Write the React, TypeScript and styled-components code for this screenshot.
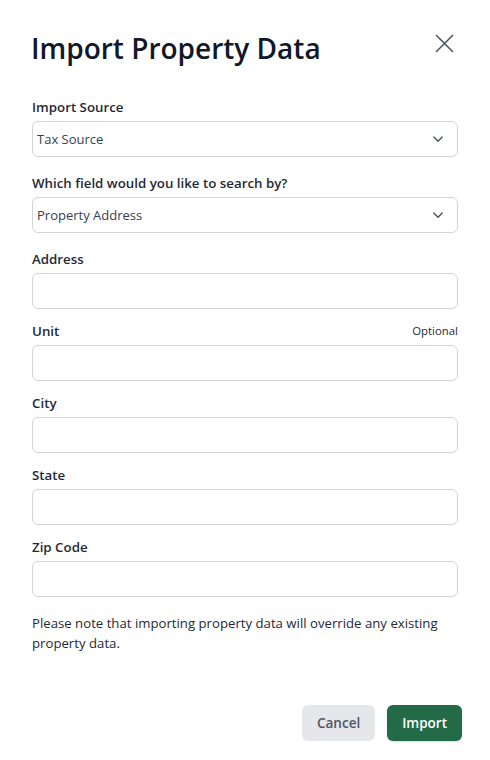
import styled, { createGlobalStyle } from "styled-components";

const GlobalStyle = createGlobalStyle`
  * { box-sizing: border-box; }
  body {
    margin: 0;
    background: #ffffff;
    font-family: "Open Sans", "Noto Sans", sans-serif;
    color: #1f2937;
  }
`;

type Field = { label: string; optional?: boolean };

const fields: Field[] = [
  { label: "Address" },
  { label: "Unit", optional: true },
  { label: "City" },
  { label: "State" },
  { label: "Zip Code" },
];

export default function App() {
  return (
    <>
      <GlobalStyle />
      <Dialog>
        <Header>
          <Title>Import Property Data</Title>
          <CloseButton aria-label="Close">
            <svg width="19" height="19" viewBox="0 0 19 19" fill="none">
              <path
                d="M1.5 1.5L17.5 17.5M17.5 1.5L1.5 17.5"
                stroke="#4b5563"
                strokeWidth="1.6"
                strokeLinecap="round"
              />
            </svg>
          </CloseButton>
        </Header>

        <Form>
          <Group $select>
            <LabelRow>
              <Label>Import Source</Label>
            </LabelRow>
            <SelectBox>
              <span>Tax Source</span>
              <Chevron />
            </SelectBox>
          </Group>

          <Group $select>
            <LabelRow>
              <Label>Which field would you like to search by?</Label>
            </LabelRow>
            <SelectBox>
              <span>Property Address</span>
              <Chevron />
            </SelectBox>
          </Group>

          {fields.map((f) => (
            <Group key={f.label}>
              <LabelRow>
                <Label>{f.label}</Label>
                {f.optional && <Hint>Optional</Hint>}
              </LabelRow>
              <Input />
            </Group>
          ))}
        </Form>

        <Note>
          Please note that importing property data will override any existing
          property data.
        </Note>

        <Footer>
          <Button>Cancel</Button>
          <Button $primary>Import</Button>
        </Footer>
      </Dialog>
    </>
  );
}

function Chevron() {
  return (
    <svg width="12" height="12" viewBox="0 0 12 12" fill="none">
      <path
        d="M1.8 4L6 8.2L10.2 4"
        stroke="#4b5563"
        strokeWidth="1.4"
        strokeLinecap="round"
        strokeLinejoin="round"
      />
    </svg>
  );
}

const Dialog = styled.div`
  width: 490px;
  height: 760px;
  padding: 28px 28px 0 32px;
  display: flex;
  flex-direction: column;
`;

const Header = styled.div`
  display: flex;
  justify-content: space-between;
  align-items: flex-start;
  padding-right: 4px;
`;

const Title = styled.h1`
  margin: 0;
  margin-left: -1px;
  font-size: 28px;
  line-height: 40px;
  font-weight: 600;
  color: #111827;
`;

const CloseButton = styled.button`
  border: none;
  background: none;
  padding: 0;
  margin-top: 6px;
  margin-right: 4px;
  width: 19px;
  height: 19px;
  display: flex;
  cursor: pointer;
`;

const Form = styled.div`
  margin-top: 29px;
  padding-right: 4px;
  display: flex;
  flex-direction: column;
  gap: 12px;
`;

const Group = styled.div<{ $select?: boolean }>`
  display: flex;
  flex-direction: column;
  margin-bottom: ${(p) => (p.$select ? "4px" : "0")};
`;

const LabelRow = styled.div`
  display: flex;
  justify-content: space-between;
  align-items: flex-end;
  height: 20px;
  margin-bottom: 4px;
`;

const Label = styled.label`
  font-size: 13.3px;
  font-weight: 600;
  line-height: 20px;
  color: #1f2937;
`;

const Hint = styled.span`
  font-size: 11.4px;
  line-height: 20px;
  color: #1f2937;
`;

const SelectBox = styled.div`
  height: 36px;
  border: 1px solid #d1d5db;
  border-radius: 6px;
  padding: 0 13px 0 4px;
  display: flex;
  align-items: center;
  justify-content: space-between;
  font-size: 13px;
  color: #374151;
`;

const Input = styled.input`
  height: 36px;
  width: 100%;
  border: 1px solid #d1d5db;
  border-radius: 6px;
  padding: 0 8px;
  font-family: inherit;
  font-size: 14px;
  outline: none;
`;

const Note = styled.p`
  margin: 16px 0 0;
  padding-right: 4px;
  font-size: 13.2px;
  line-height: 20px;
  color: #1f2937;
`;

const Footer = styled.div`
  margin-top: 52px;
  display: flex;
  justify-content: flex-end;
  gap: 12px;
`;

const Button = styled.button<{ $primary?: boolean }>`
  height: 36px;
  padding: 0 15px;
  border: none;
  border-radius: 6px;
  font-family: inherit;
  font-size: 13.5px;
  font-weight: 600;
  cursor: pointer;
  background: ${(p) => (p.$primary ? "#236a48" : "#e5e7eb")};
  color: ${(p) => (p.$primary ? "#ffffff" : "#4b5563")};
  box-shadow: ${(p) => (p.$primary ? "0 1px 2px rgba(0,0,0,0.15)" : "none")};
`;
